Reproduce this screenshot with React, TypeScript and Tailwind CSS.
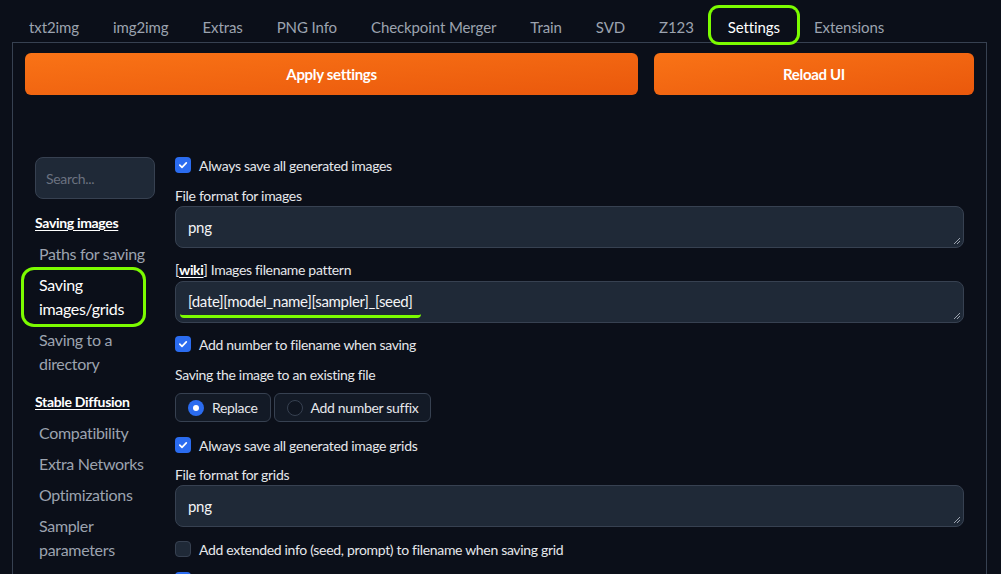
import React from 'react';

const tabs = ['txt2img', 'img2img', 'Extras', 'PNG Info', 'Checkpoint Merger', 'Train', 'SVD', 'Z123', 'Settings', 'Extensions'];

function Checkbox({ checked }: { checked: boolean }) {
    if (!checked) {
        return <span className="w-4 h-4 shrink-0 rounded-[4px] border border-[#374151] bg-[#1f2937]" />;
    }
    return (
        <span className="w-4 h-4 shrink-0 rounded-[4px] bg-[#2b6cf0] flex items-center justify-center">
            <svg width="10" height="10" viewBox="0 0 10 10" fill="none">
                <path d="M1.8 5.2 4 7.3 8.3 2.8" stroke="white" strokeWidth="1.7" strokeLinecap="round" strokeLinejoin="round" />
            </svg>
        </span>
    );
}

function CheckRow({ checked, label, className = '' }: { checked: boolean; label: string; className?: string }) {
    return (
        <label className={`flex items-center gap-2 h-5 text-[14px] text-[#e5e7eb] ${className}`}>
            <Checkbox checked={checked} />
            <span className="whitespace-nowrap">{label}</span>
        </label>
    );
}

function TextBox({ value, underline = false }: { value: string; underline?: boolean }) {
    return (
        <div className="relative h-[42px] rounded-lg border border-[#374151] bg-[#1f2937] px-3 flex items-center text-[15px] text-[#f3f4f6]">
            <span className={underline ? 'border-b-[3px] border-[#7cfc00] -mx-2 px-2 pb-[2px] mt-[4px] rounded-sm' : ''}>{value}</span>
            <svg className="absolute right-[2px] bottom-[2px]" width="8" height="8" viewBox="0 0 8 8">
                <path d="M7 1 1 7M7 4 4 7" stroke="#9ca3af" strokeWidth="1" />
            </svg>
        </div>
    );
}

function NavItem({ children }: { children: React.ReactNode }) {
    return <div className="pl-1 text-[16px] leading-6 text-[#9ca3af] whitespace-pre-line">{children}</div>;
}

export default function App() {
    return (
        <div className="min-h-screen bg-[#0b0f19] font-['Lato',sans-serif] tracking-[-0.02em] overflow-hidden">
            <div className="flex pl-3 pt-2 h-[42px] tracking-[-0.1px]">
                {tabs.map((t) => (
                    <div
                        key={t}
                        className={`h-[34px] px-[17px] pt-1 flex items-center text-[15px] ${
                            t === 'Settings'
                                ? 'relative z-10 text-white bg-[#0b0f19] rounded-lg ring-[3px] ring-[#7cfc00]'
                                : 'text-[#9ca3af]'
                        }`}
                    >
                        {t}
                    </div>
                ))}
            </div>

            <div className="ml-3 w-[975px] border border-[#374151] border-b-0 px-3 pt-[10px] h-[540px]">
                <div className="flex gap-4">
                    <button className="w-[613px] h-[42px] rounded-md bg-gradient-to-br from-[#f97316] to-[#ea580c] text-white font-bold text-[15px]">
                        Apply settings
                    </button>
                    <button className="flex-1 h-[42px] rounded-md bg-gradient-to-br from-[#f97316] to-[#ea580c] text-white font-bold text-[15px]">
                        Reload UI
                    </button>
                </div>

                <div className="flex gap-5 px-[10px] mt-[62px]">
                    <div className="w-[120px] shrink-0 flex flex-col">
                        <div className="h-[42px] rounded-lg border border-[#374151] bg-[#1f2937] px-[10px] flex items-center text-[14px] text-[#6b7280]">
                            Search...
                        </div>
                        <div className="flex flex-col gap-[7px] mt-3">
                            <div className="text-[14px] leading-6 font-bold text-white underline underline-offset-2">Saving images</div>
                            <NavItem>Paths for saving</NavItem>
                            <div className="-ml-[11px] pl-[15px] w-[119px] py-[3px] -my-[3px] rounded-[10px] ring-[3px] ring-[#7cfc00] text-[16px] leading-6 text-white">
                                Saving
                                <br />
                                images/grids
                            </div>
                            <NavItem>{'Saving to a\ndirectory'}</NavItem>
                            <div className="mt-[7px] text-[14px] leading-6 font-bold text-white underline underline-offset-2">Stable Diffusion</div>
                            <NavItem>Compatibility</NavItem>
                            <NavItem>Extra Networks</NavItem>
                            <NavItem>Optimizations</NavItem>
                            <NavItem>{'Sampler\nparameters'}</NavItem>
                        </div>
                    </div>

                    <div className="flex-1 flex flex-col -mt-[2px]">
                        <CheckRow checked label="Always save all generated images" />
                        <div className="mt-[11px] text-[14px] leading-5 text-[#e5e7eb]">File format for images</div>
                        <TextBox value="png" />

                        <div className="mt-[12px] text-[14px] leading-5 text-[#e5e7eb]">
                            [<span className="font-bold text-white underline underline-offset-2">wiki</span>] Images filename pattern
                        </div>
                        <div className="mt-px">
                            <TextBox value="[date][model_name][sampler]_[seed]" underline />
                        </div>

                        <CheckRow checked label="Add number to filename when saving" className="mt-[11px]" />
                        <div className="mt-[11px] text-[14px] leading-5 text-[#e5e7eb]">Saving the image to an existing file</div>
                        <div className="mt-2 flex gap-[3px]">
                            <div className="h-[29px] pl-3 pr-3 rounded-md border border-[#374151] bg-[#131a26] flex items-center gap-2 text-[14px] text-[#e5e7eb]">
                                <span className="w-4 h-4 rounded-full bg-[#2b6cf0] flex items-center justify-center">
                                    <span className="w-[6px] h-[6px] rounded-full bg-white" />
                                </span>
                                Replace
                            </div>
                            <div className="h-[29px] pl-3 pr-3 rounded-md border border-[#374151] bg-[#131a26] flex items-center gap-2 text-[14px] text-[#e5e7eb]">
                                <span className="w-4 h-4 rounded-full border border-[#374151] bg-[#0f1520]" />
                                Add number suffix
                            </div>
                        </div>

                        <CheckRow checked label="Always save all generated image grids" className="mt-[13px]" />
                        <div className="mt-[10px] text-[14px] leading-5 text-[#e5e7eb]">File format for grids</div>
                        <TextBox value="png" />

                        <CheckRow checked={false} label="Add extended info (seed, prompt) to filename when saving grid" className="mt-[12px]" />
                        <CheckRow checked label="Save text information about generation parameters as chunks to png files" className="mt-[11px]" />
                    </div>
                </div>
            </div>
        </div>
    );
}
